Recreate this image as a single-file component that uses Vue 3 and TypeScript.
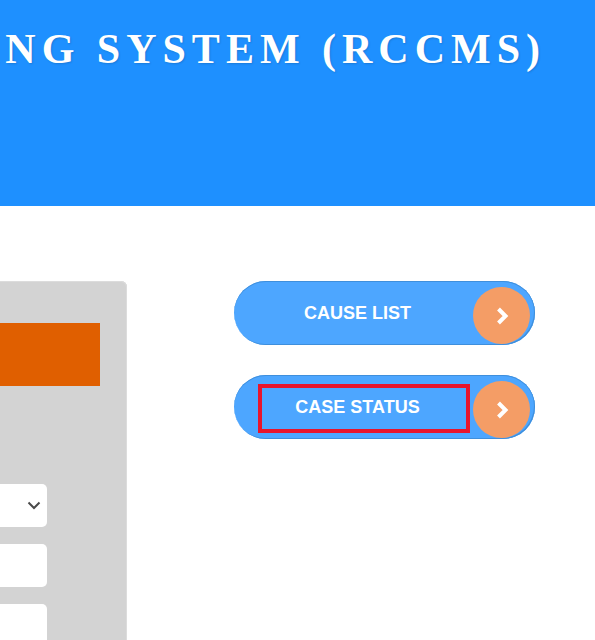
<script setup lang="ts">
const buttons: { label: string; marked: boolean }[] = [
  { label: 'CAUSE LIST', marked: false },
  { label: 'CASE STATUS', marked: true },
]
</script>

<template>
  <div class="page">
    <header class="banner">
      <h1 class="title">REVENUE COURT CASE MONITORING SYSTEM (RCCMS)</h1>
    </header>
    <main class="content">
      <section class="panel">
        <div class="panel-head"></div>
        <div class="field select">
          <svg width="14" height="9" viewBox="0 0 14 9" class="caret">
            <path d="M1.500 1.500 7 7l5.500-5.500" fill="none" stroke="#4a4a4a" stroke-width="2" />
          </svg>
        </div>
        <div class="field"></div>
        <div class="field"></div>
      </section>
      <nav class="links">
        <a v-for="b in buttons" :key="b.label" class="link">
          <span class="label">{{ b.label }}</span>
          <span class="go">
            <svg width="16" height="20" viewBox="0 0 16 20">
              <path d="M4.500 3 11.500 10 4.500 17" fill="none" stroke="#fff" stroke-width="4" />
            </svg>
          </span>
          <span v-if="b.marked" class="mark"></span>
        </a>
      </nav>
    </main>
  </div>
</template>

<style scoped>
.page {
  width: 595px;
  height: 640px;
  overflow: hidden;
  background: #fff;
  font-family: "Liberation Sans", Arial, sans-serif;
}
.banner {
  height: 206px;
  background: #1e90ff;
  display: flex;
  justify-content: flex-end;
  overflow: hidden;
  padding-right: 49px;
  box-sizing: border-box;
}
.title {
  margin: 26px 0 0;
  flex: none;
  white-space: nowrap;
  font-family: "Liberation Serif", "Times New Roman", serif;
  font-size: 42px;
  line-height: 46px;
  font-weight: 700;
  letter-spacing: 6px;
  color: #fff;
  text-shadow: 1px 1px 2px rgba(0, 0, 0, 0.15);
}
.content {
  display: flex;
  align-items: flex-start;
  padding-top: 75px;
}
.panel {
  width: 127px;
  height: 359px;
  flex: none;
  box-sizing: border-box;
  background: #d3d3d3;
  border-top-right-radius: 6px;
  box-shadow: inset 0 1px 0 #dcdcdc, inset -1px 0 0 #dcdcdc;
  padding-top: 42px;
}
.panel-head {
  width: 100px;
  height: 63px;
  background: #e05f00;
  margin-bottom: 98px;
}
.field {
  width: 47px;
  height: 43px;
  box-sizing: border-box;
  background: #fff;
  border-radius: 0 5px 5px 0;
  margin-bottom: 17px;
  display: flex;
  align-items: center;
  justify-content: flex-end;
  padding-right: 6px;
}
.caret {
  display: block;
}
.links {
  margin-left: 107px;
  display: flex;
  flex-direction: column;
  gap: 30px;
}
.link {
  position: relative;
  width: 301px;
  height: 64px;
  box-sizing: border-box;
  border-radius: 32px;
  background: #4da6ff;
  box-shadow: inset 0 1px 0 #3f8fdc, inset -1px -1px 0 #3f8fdc;
  display: flex;
  align-items: center;
  color: #fff;
}
.label {
  flex: 1;
  text-align: center;
  padding-left: 8px;
  margin-top: -1px;
  font-size: 18px;
  font-weight: 700;
  line-height: 20px;
}
.go {
  flex: none;
  width: 57px;
  height: 57px;
  margin: 5px 5px 0 0;
  border-radius: 50%;
  background: #f49d66;
  display: flex;
  align-items: center;
  justify-content: center;
}
.go svg {
  display: block;
}
.mark {
  position: absolute;
  left: 24px;
  top: 9px;
  width: 212px;
  height: 49px;
  box-sizing: border-box;
  border: 4px solid #e8142c;
}
</style>
